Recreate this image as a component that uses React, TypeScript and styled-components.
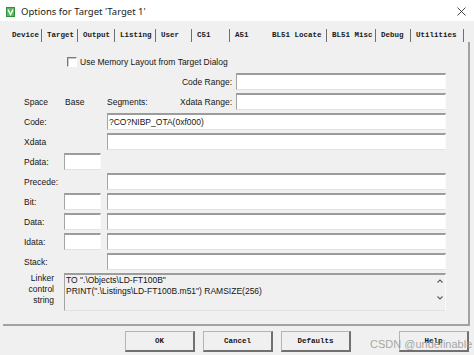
import React from "react";
import styled, { createGlobalStyle } from "styled-components";

const Global = createGlobalStyle`
  html, body { margin: 0; padding: 0; background: #f0f0f0; }
  body { width: 474px; height: 355px; overflow: hidden; font-family: "Liberation Sans", Arial, sans-serif; }
  #root { width: 474px; height: 355px; }
`;

const Window = styled.div`
  position: relative;
  width: 474px;
  height: 355px;
  display: flex;
  flex-direction: column;
  background: #f0f0f0;
  overflow: hidden;
`;

const TitleBar = styled.div`
  box-sizing: border-box;
  height: 21px;
  padding: 2px 8px 0 6px;
  background: #fff;
  display: flex;
  align-items: center;
  gap: 6px;
`;

const TitleText = styled.span`
  flex: 1;
  font-family: "Noto Sans", "Liberation Sans", sans-serif;
  font-size: 9.5px;
  color: #1a1a1a;
  white-space: nowrap;
`;

const TabRow = styled.div`
  display: flex;
  padding: 8px 0 0 7px;
  height: 13px;
`;

const Tab = styled.div<{ $w: number; $sep: boolean; $active?: boolean }>`
  box-sizing: border-box;
  width: ${(p) => p.$w}px;
  height: 13px;
  padding-left: ${(p) => (p.$active ? 10 : 5)}px;
  border-right: 1px solid ${(p) => (p.$sep ? "#6f6f6f" : "transparent")};
  font-family: "Liberation Mono", monospace;
  font-weight: bold;
  font-size: 7.5px;
  line-height: 13px;
  color: #1a1a1a;
  white-space: nowrap;
`;

const Panel = styled.div`
  margin: 0 4px 0 3px;
  padding: 11px 22px 13px 21px;
  border-right: 2px solid #a2a2a2;
  border-bottom: 2px solid #a2a2a2;
  display: grid;
  grid-template-columns: 40px 37px 6px 1fr;
  grid-template-rows: repeat(11, 17px) 38px;
  row-gap: 3px;
`;

const Label = styled.span<{ $col?: number }>`
  grid-column: ${(p) => p.$col ?? 1};
  align-self: center;
  padding-left: ${(p) => (p.$col === 2 ? 1 : p.$col === 4 ? 1 : 0)}px;
  font-size: 8.5px;
  color: #151515;
  white-space: nowrap;
`;

const CheckRow = styled.label`
  grid-column: 1 / -1;
  display: flex;
  align-items: center;
  gap: 3px;
  padding-left: 43px;
  font-size: 8.5px;
  color: #151515;
`;

const CheckBox = styled.span`
  box-sizing: border-box;
  width: 10px;
  height: 10px;
  background: #fff;
  border-top: 1px solid #7a7a7a;
  border-left: 1px solid #7a7a7a;
  border-right: 1px solid #fff;
  border-bottom: 1px solid #fff;
  box-shadow: inset 1px 1px 0 #c8c8c8;
`;

const SegCell = styled.div<{ $justify: string }>`
  grid-column: 4;
  display: flex;
  align-items: center;
  justify-content: ${(p) => p.$justify};
  gap: 4px;
`;

const Field = styled.div<{ $w?: number; $col?: string }>`
  box-sizing: border-box;
  grid-column: ${(p) => p.$col ?? "auto"};
  width: ${(p) => (p.$w ? `${p.$w}px` : "100%")};
  height: 17px;
  background: #fff;
  border-top: 2px solid #9c9c9c;
  border-left: 1px solid #a4a4a4;
  border-right: 1px solid #fbfbfb;
  border-bottom: 1px solid #e2e2e2;
  padding-left: 1px;
  font-size: 8.5px;
  line-height: 14px;
  color: #151515;
  white-space: nowrap;
  overflow: hidden;
`;

const LinkerLabel = styled.div`
  grid-column: 1;
  align-self: start;
  padding-right: 10px;
  text-align: right;
  font-size: 8.5px;
  line-height: 11px;
  color: #151515;
`;

const LinkerBox = styled.div`
  box-sizing: border-box;
  grid-column: 2 / 5;
  display: flex;
  background: #f0f0f0;
  border-top: 2px solid #9c9c9c;
  border-left: 1px solid #a4a4a4;
  border-right: 1px solid #fbfbfb;
  border-bottom: 1px solid #e2e2e2;
`;

const LinkerText = styled.div`
  flex: 1;
  padding-left: 1px;
  font-size: 8.5px;
  line-height: 11px;
  color: #151515;
  white-space: pre;
`;

const ScrollCol = styled.div`
  width: 10px;
  display: flex;
  flex-direction: column;
  align-items: center;
  gap: 13px;
  padding-top: 4px;
`;

const ButtonRow = styled.div`
  display: flex;
  gap: 8px;
  margin-top: 5px;
  padding: 0 5px 0 125px;
`;

const Btn = styled.button<{ $push?: boolean }>`
  box-sizing: border-box;
  width: 70px;
  height: 21px;
  margin-left: ${(p) => (p.$push ? "auto" : "0")};
  padding: 0;
  background: #f0f0f0;
  border-top: 1px solid #b4b4b4;
  border-left: 1px solid #b4b4b4;
  border-right: 2px solid #707070;
  border-bottom: 2px solid #707070;
  font-family: "Liberation Mono", monospace;
  font-weight: bold;
  font-size: 7.5px;
  color: #151515;
`;

const Watermark = styled.span`
  position: absolute;
  left: 370px;
  top: 338px;
  font-family: "Liberation Sans", Arial, sans-serif;
  font-size: 11px;
  color: rgba(150, 150, 150, 0.85);
  white-space: nowrap;
  pointer-events: none;
`;

const tabs: { label: string; w: number; sep: boolean; active?: boolean }[] = [
  { label: "Device", w: 35, sep: true },
  { label: "Target", w: 36, sep: true },
  { label: "Output", w: 37, sep: true },
  { label: "Listing", w: 41, sep: true },
  { label: "User", w: 36, sep: true },
  { label: "C51", w: 38, sep: true },
  { label: "A51", w: 32, sep: false },
  { label: "BL51 Locate", w: 65, sep: true, active: true },
  { label: "BL51 Misc", w: 49, sep: true },
  { label: "Debug", w: 35, sep: true },
  { label: "Utilities", w: 53, sep: true },
];

const AppIcon = () => (
  <svg width="9" height="10" viewBox="0 0 9 10">
    <rect x="0" y="0" width="9" height="10" fill="#2f8f3a" />
    <rect x="1" y="1" width="7" height="8" fill="#5cb85c" />
    <path d="M2 2.5 L4.5 7.5 L7 2.5" stroke="#fff" strokeWidth="1.4" fill="none" />
  </svg>
);

const CloseIcon = () => (
  <svg width="9" height="9" viewBox="0 0 9 9">
    <path d="M0.5 0.5 L8.5 8.5 M8.5 0.5 L0.5 8.5" stroke="#333" strokeWidth="0.9" />
  </svg>
);

const Chevron = ({ up }: { up: boolean }) => (
  <svg width="6" height="4" viewBox="0 0 6 4">
    <path d={up ? "M0.5 3.5 L3 1 L5.5 3.5" : "M0.5 0.5 L3 3 L5.5 0.5"} stroke="#5a5a6a" strokeWidth="1.1" fill="none" />
  </svg>
);

const rows: { label: string; base: boolean; value?: string }[] = [
  { label: "Code:", base: false, value: "?CO?NIBP_OTA(0xf000)" },
  { label: "Xdata", base: false },
  { label: "Pdata:", base: true },
  { label: "Precede:", base: false },
  { label: "Bit:", base: true },
  { label: "Data:", base: true },
  { label: "Idata:", base: true },
  { label: "Stack:", base: false },
];

export default function App() {
  return (
    <Window>
      <Global />
      <TitleBar>
        <AppIcon />
        <TitleText>Options for Target 'Target 1'</TitleText>
        <CloseIcon />
      </TitleBar>
      <TabRow>
        {tabs.map((t) => (
          <Tab key={t.label} $w={t.w} $sep={t.sep} $active={t.active}>
            {t.label}
          </Tab>
        ))}
      </TabRow>
      <Panel>
        <CheckRow>
          <CheckBox />
          Use Memory Layout from Target Dialog
        </CheckRow>

        <SegCell $justify="flex-end">
          <Label>Code Range:</Label>
          <Field $w={210} />
        </SegCell>

        <Label $col={1}>Space</Label>
        <Label $col={2}>Base</Label>
        <SegCell $justify="space-between">
          <Label>Segments:</Label>
          <SegCell $justify="flex-end">
            <Label>Xdata Range:</Label>
            <Field $w={210} />
          </SegCell>
        </SegCell>

        {rows.map((r) => (
          <React.Fragment key={r.label}>
            <Label $col={1}>{r.label}</Label>
            {r.base && <Field $col="2" />}
            {r.label === "Pdata:" ? null : <Field $col="4">{r.value}</Field>}
          </React.Fragment>
        ))}

        <LinkerLabel>
          Linker
          <br />
          control
          <br />
          string
        </LinkerLabel>
        <LinkerBox>
          <LinkerText>
            {'TO ".\\Objects\\LD-FT100B"\nPRINT(".\\Listings\\LD-FT100B.m51") RAMSIZE(256)'}
          </LinkerText>
          <ScrollCol>
            <Chevron up />
            <Chevron up={false} />
          </ScrollCol>
        </LinkerBox>
      </Panel>
      <ButtonRow>
        <Btn>OK</Btn>
        <Btn>Cancel</Btn>
        <Btn>Defaults</Btn>
        <Btn $push>Help</Btn>
      </ButtonRow>
      <Watermark>CSDN @undefinable</Watermark>
    </Window>
  );
}
